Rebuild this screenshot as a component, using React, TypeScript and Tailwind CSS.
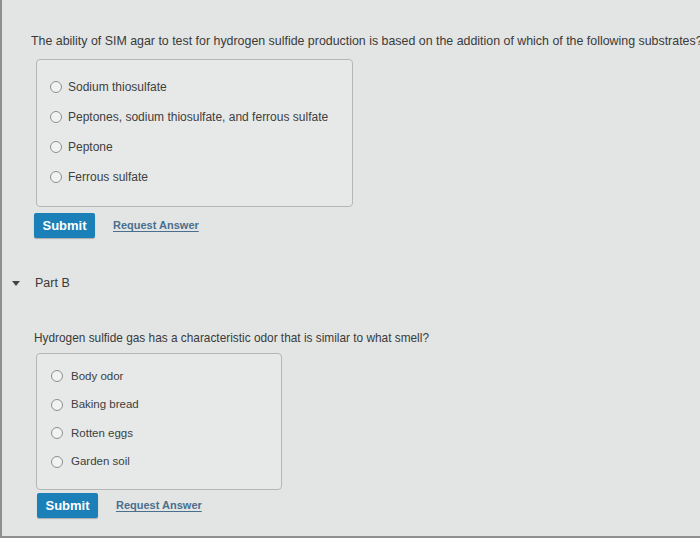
const font = { fontFamily: '"Liberation Sans", Arial, sans-serif' };

function Radio() {
  return (
    <span className="inline-block h-[12px] w-[12px] shrink-0 rounded-full border border-[#8d8f8f] bg-[#f1f2f2]" />
  );
}

function Options({ items, rowClass, textClass }: { items: string[]; rowClass: string; textClass: string }) {
  return (
    <>
      {items.map((item) => (
        <div key={item} className={`flex items-center ${rowClass}`}>
          <Radio />
          <span className={textClass}>{item}</span>
        </div>
      ))}
    </>
  );
}

function Actions({ className }: { className: string }) {
  return (
    <div className={`flex items-center ${className}`}>
      <button className="h-[25px] w-[61px] rounded-[2px] bg-[#1b80b7] text-[13px] font-bold text-white shadow-[0_1px_1px_rgba(0,0,0,0.25)]">
        Submit
      </button>
      <a className="ml-[18px] text-[11px] font-bold text-[#4a6f8e] underline underline-offset-2">Request Answer</a>
    </div>
  );
}

export default function App() {
  return (
    <div
      style={font}
      className="h-[538px] w-[700px] overflow-hidden border-b-2 border-l-2 border-[#8e908f] bg-[#e3e5e4] text-[#333]"
    >
      <p className="ml-[29px] mt-[33px] whitespace-nowrap text-[12.4px] leading-[16px] text-[#3a3a3a]">
        The ability of SIM agar to test for hydrogen sulfide production is based on the addition of which of the following substrates?
      </p>

      <div className="ml-[34px] mt-[10px] h-[148px] w-[317px] rounded-[4px] border border-[#b5b7b6] bg-[#e7e9e8] pt-[12px]">
        <Options
          items={['Sodium thiosulfate', 'Peptones, sodium thiosulfate, and ferrous sulfate', 'Peptone', 'Ferrous sulfate']}
          rowClass="h-[30px] pl-[13px]"
          textClass="ml-[6px] text-[12px] text-[#404040]"
        />
      </div>

      <Actions className="ml-[32px] mt-[6px]" />

      <div className="ml-[10px] mt-[33px] flex h-[24px] items-center">
        <span className="h-0 w-0 border-l-[4px] border-r-[4px] border-t-[5px] border-l-transparent border-r-transparent border-t-[#444]" />
        <span className="ml-[15px] text-[12.5px] text-[#3a3a3a]">Part B</span>
      </div>

      <p className="ml-[32px] mt-[35px] whitespace-nowrap text-[11.85px] leading-[16px] text-[#3a3a3a]">
        Hydrogen sulfide gas has a characteristic odor that is similar to what smell?
      </p>

      <div className="ml-[34px] mt-[7px] h-[137px] w-[246px] rounded-[4px] border border-[#b5b7b6] bg-[#e7e9e8] pt-[8px]">
        <Options
          items={['Body odor', 'Baking bread', 'Rotten eggs', 'Garden soil']}
          rowClass="h-[28.5px] pl-[14px]"
          textClass="ml-[8px] text-[11.5px] text-[#404040]"
        />
      </div>

      <Actions className="ml-[35px] mt-[3px]" />
    </div>
  );
}
